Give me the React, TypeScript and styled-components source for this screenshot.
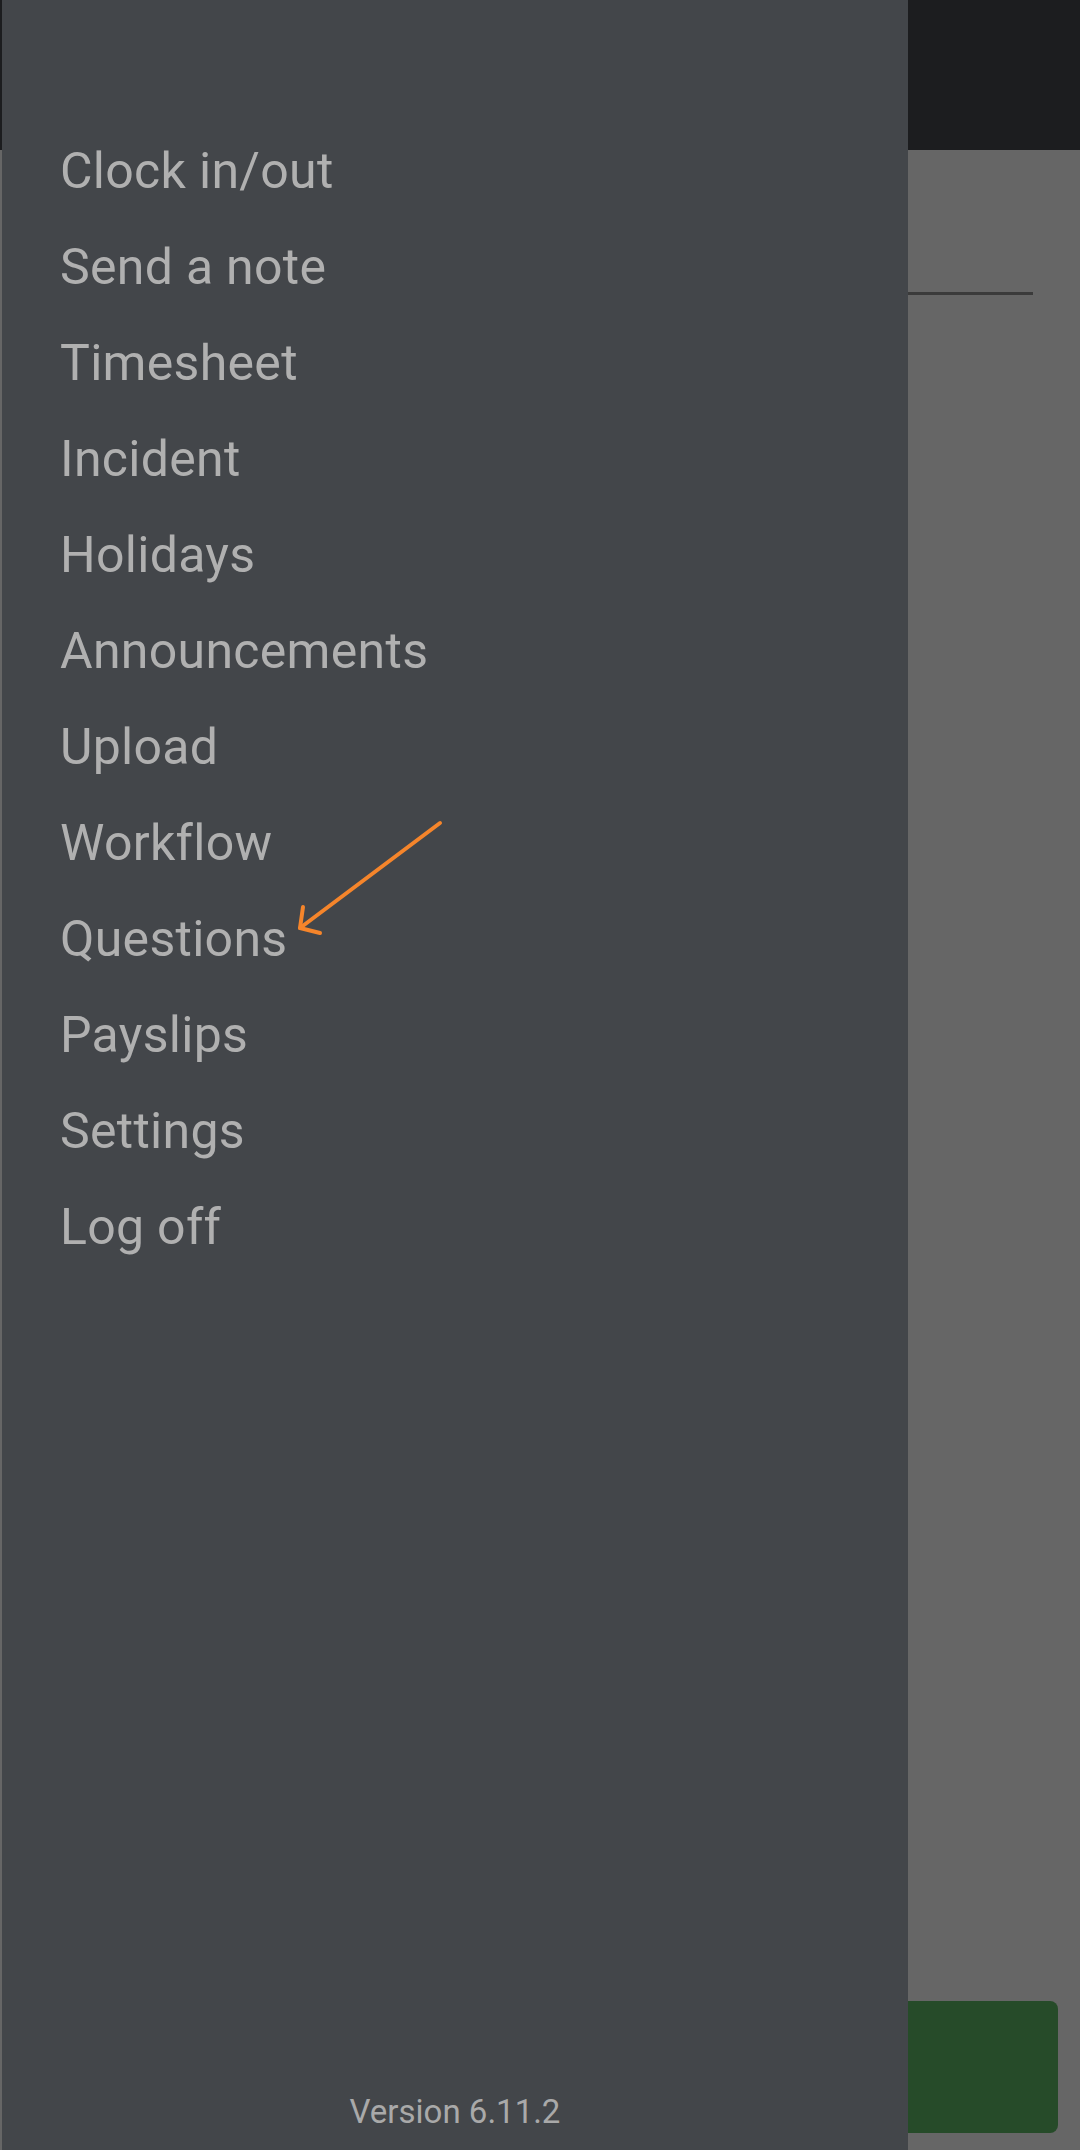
import React from "react";
import styled, { createGlobalStyle } from "styled-components";

const GlobalStyle = createGlobalStyle`
  html, body { margin: 0; padding: 0; background: #666666; }
  body { font-family: Roboto, "Noto Sans", "Liberation Sans", sans-serif; }
  * { box-sizing: border-box; }
`;

const Screen = styled.div`
  position: relative;
  width: 1080px;
  height: 2150px;
  overflow: hidden;
  display: flex;
  flex-direction: column;
  background: #666666;
`;

const AppBar = styled.div`
  height: 150px;
  flex: none;
  background: #1c1d1f;
`;

const Content = styled.div`
  flex: 1;
  display: flex;
  flex-direction: column;
  padding: 142px 22px 17px 60px;
`;

const FieldLine = styled.div`
  height: 3px;
  margin-right: 25px;
  background: #3b3b3b;
`;

const Spacer = styled.div`
  flex: 1;
`;

const PrimaryButton = styled.div`
  height: 132px;
  border-radius: 8px;
  background: #264b29;
`;

const Drawer = styled.nav`
  position: absolute;
  top: 0;
  bottom: 0;
  left: 2px;
  width: 906px;
  background: #43464a;
  display: flex;
  flex-direction: column;
`;

const Menu = styled.ul`
  list-style: none;
  margin: 0;
  padding: 123px 0 0 0;
`;

const MenuItem = styled.li`
  height: 96px;
  line-height: 96px;
  padding-left: 58px;
  font-size: 50px;
  letter-spacing: 0.3px;
  color: #b0b0b0;
  white-space: nowrap;
`;

const Footer = styled.div`
  margin-top: auto;
  padding-bottom: 18px;
  text-align: center;
  font-size: 33px;
  line-height: 40px;
  color: #a9a9a9;
`;

const ArrowOverlay = styled.svg`
  position: absolute;
  left: 0;
  top: 0;
  width: 1080px;
  height: 2150px;
  pointer-events: none;
`;

const items = [
  "Clock in/out",
  "Send a note",
  "Timesheet",
  "Incident",
  "Holidays",
  "Announcements",
  "Upload",
  "Workflow",
  "Questions",
  "Payslips",
  "Settings",
  "Log off",
];

export default function App() {
  return (
    <>
      <GlobalStyle />
      <Screen>
        <AppBar />
        <Content>
          <FieldLine />
          <Spacer />
          <PrimaryButton />
        </Content>
        <Drawer>
          <Menu>
            {items.map((t) => (
              <MenuItem key={t}>{t}</MenuItem>
            ))}
          </Menu>
          <Footer>Version 6.11.2</Footer>
        </Drawer>
        <ArrowOverlay viewBox="0 0 1080 2150">
          <g
            fill="none"
            stroke="#f5852b"
            strokeWidth="4"
            strokeLinecap="round"
            strokeLinejoin="round"
          >
            <path d="M440 823 L300 928" />
            <path d="M303 907 L300 928 L320 933" />
          </g>
        </ArrowOverlay>
      </Screen>
    </>
  );
}
